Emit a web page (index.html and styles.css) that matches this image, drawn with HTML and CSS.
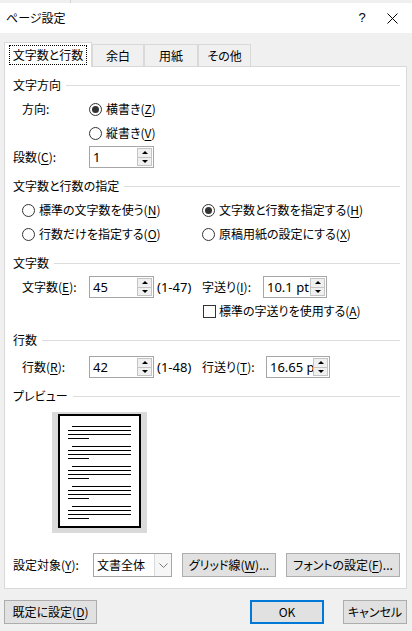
FILE: index.html
```html
<!DOCTYPE html>
<html lang="ja">
<head>
    <meta charset="UTF-8">
    <meta name="viewport" content="width=device-width, initial-scale=1">
    <title>ページ設定</title>
    <link rel="stylesheet" href="styles.css">
</head>
<body>
    <div class="dialog">
        <div class="top-strip"><span class="top-tick"></span></div>

        <!-- Title bar -->
        <div class="titlebar">
            <span class="title">ページ設定</span>
            <span class="title-btn">?</span>
            <span class="title-btn">
                <svg width="11" height="11" viewBox="0 0 11 11"><path d="M0.5 0.5L10.5 10.5M10.5 0.5L0.5 10.5" stroke="#000" stroke-width="1" fill="none"/></svg>
            </span>
        </div>

        <!-- Tabs -->
        <div class="tabs">
            <div class="tab tab-active"><span class="focus">文字数と行数</span></div>
            <div class="tab tab-margin">余白</div>
            <div class="tab tab-paper">用紙</div>
            <div class="tab tab-other">その他</div>
        </div>

        <div class="panel">
            <!-- 文字方向 -->
            <div class="group-title">文字方向</div>
            <div class="row">
                <span class="label">方向:</span>
                <span class="option"><span class="radio checked"></span>横書き(<u>Z</u>)</span>
            </div>
            <div class="row">
                <span class="option option-indent"><span class="radio"></span>縦書き(<u>V</u>)</span>
            </div>
            <div class="row row-flush">
                <span class="label label-wide">段数(<u>C</u>):</span>
                <div class="spin">
                    <span class="spin-value">1</span>
                    <span class="spin-btns"><span class="spin-up"></span><span class="spin-down"></span></span>
                </div>
            </div>

            <!-- 文字数と行数の指定 -->
            <div class="group-title group-gap">文字数と行数の指定</div>
            <div class="row">
                <span class="option col"><span class="radio"></span>標準の文字数を使う(<u>N</u>)</span>
                <span class="option"><span class="radio checked"></span>文字数と行数を指定する(<u>H</u>)</span>
            </div>
            <div class="row">
                <span class="option col"><span class="radio"></span>行数だけを指定する(<u>O</u>)</span>
                <span class="option"><span class="radio"></span>原稿用紙の設定にする(<u>X</u>)</span>
            </div>

            <!-- 文字数 -->
            <div class="group-title group-gap">文字数</div>
            <div class="row">
                <span class="label">文字数(<u>E</u>):</span>
                <div class="spin">
                    <span class="spin-value">45</span>
                    <span class="spin-btns"><span class="spin-up"></span><span class="spin-down"></span></span>
                </div>
                <span class="range">(1-47)</span>
                <span class="label-pitch">字送り(<u>I</u>):</span>
                <div class="spin spin-small">
                    <span class="spin-value">10.1 pt</span>
                    <span class="spin-btns"><span class="spin-up"></span><span class="spin-down"></span></span>
                </div>
            </div>
            <div class="row">
                <span class="option check-indent"><span class="checkbox"></span>標準の字送りを使用する(<u>A</u>)</span>
            </div>

            <!-- 行数 -->
            <div class="group-title group-gap">行数</div>
            <div class="row row-lines">
                <span class="label">行数(<u>R</u>):</span>
                <div class="spin">
                    <span class="spin-value">42</span>
                    <span class="spin-btns"><span class="spin-up"></span><span class="spin-down"></span></span>
                </div>
                <span class="range">(1-48)</span>
                <span class="label-pitch label-pitch-wide">行送り(<u>T</u>):</span>
                <div class="spin spin-small">
                    <span class="spin-value">16.65 pt</span>
                    <span class="spin-btns"><span class="spin-up"></span><span class="spin-down"></span></span>
                </div>
            </div>

            <!-- プレビュー -->
            <div class="group-title group-gap">プレビュー</div>
            <div class="preview">
                <svg width="95" height="121" viewBox="0 0 95 121">
                    <rect x="0" y="0" width="95" height="121" fill="#dadada"/>
                    <rect x="7" y="3" width="81" height="112" fill="#fff" stroke="#000" stroke-width="2"/>
                    <g fill="#000">
                        <rect x="20" y="14" width="59" height="1"/>
                        <rect x="16" y="18" width="63" height="1"/>
                        <rect x="16" y="22" width="63" height="1"/>
                        <rect x="16" y="26" width="21" height="1"/>

                        <rect x="20" y="34" width="59" height="1"/>
                        <rect x="16" y="38" width="63" height="1"/>
                        <rect x="16" y="42" width="63" height="1"/>
                        <rect x="16" y="46" width="21" height="1"/>

                        <rect x="20" y="54" width="59" height="1"/>
                        <rect x="16" y="58" width="63" height="1"/>
                        <rect x="16" y="62" width="63" height="1"/>
                        <rect x="16" y="66" width="21" height="1"/>

                        <rect x="20" y="74" width="59" height="1"/>
                        <rect x="16" y="78" width="63" height="1"/>
                        <rect x="16" y="82" width="63" height="1"/>
                        <rect x="16" y="86" width="21" height="1"/>

                        <rect x="20" y="94" width="59" height="1"/>
                        <rect x="16" y="98" width="63" height="1"/>
                        <rect x="16" y="102" width="63" height="1"/>
                        <rect x="16" y="106" width="21" height="1"/>
                    </g>
                </svg>
            </div>

            <!-- 設定対象 -->
            <div class="apply-row">
                <span class="apply-label">設定対象(<u>Y</u>):</span>
                <div class="combo">
                    <span class="combo-value">文書全体</span>
                    <span class="combo-arrow">
                        <svg width="9" height="5" viewBox="0 0 9 5"><path d="M0.5 0.5L4.5 4.5L8.5 0.5" stroke="#7a7a7a" stroke-width="1" fill="none"/></svg>
                    </span>
                </div>
                <span class="btn btn-grid">グリッド線(<u>W</u>)...</span>
                <span class="btn btn-font">フォントの設定(<u>F</u>)...</span>
            </div>
        </div>

        <!-- Dialog buttons -->
        <div class="footer">
            <span class="btn btn-default">既定に設定(<u>D</u>)</span>
            <span class="btn btn-ok">OK</span>
            <span class="btn btn-cancel">キャンセル</span>
        </div>
    </div>
</body>
</html>
```

FILE: styles.css
```css
body {
    margin: 0;
    background-color: #f0f0f0;
    font-family: "Noto Sans CJK JP", "Noto Sans", sans-serif;
    font-size: 12px;
    line-height: 16px;
    color: #000;
    font-feature-settings: "palt";
}

u {
    text-decoration-thickness: 1px;
    text-underline-offset: 2px;
}

.dialog {
    width: 412px;
    height: 631px;
    overflow: hidden;
}

.top-strip {
    height: 3px;
    background-color: #f0f0f0;
}

.top-tick {
    display: block;
    margin-left: 70px;
    width: 1px;
    height: 3px;
    background-color: #d4d4d4;
}

/* Title bar */
.titlebar {
    height: 30px;
    background-color: #ffffff;
    display: flex;
    align-items: center;
    padding: 0 5px 0 6px;
}

.title {
    flex: 1;
}

.title-btn {
    width: 30px;
    height: 30px;
    display: flex;
    justify-content: center;
    align-items: center;
    font-family: "Liberation Sans", sans-serif;
    font-size: 13px;
}

/* Tabs */
.tabs {
    margin-top: 9px;
    padding-left: 4px;
    height: 25px;
    display: flex;
    align-items: flex-end;
}

.tab {
    box-sizing: border-box;
    height: 22px;
    margin-bottom: 1px;
    border: 1px solid #d9d9d9;
    border-bottom: none;
    display: flex;
    justify-content: center;
    align-items: center;
}

.tab-active {
    width: 88px;
    height: 25px;
    margin-bottom: 0;
    background-color: #ffffff;
    position: relative;
    z-index: 1;
}

.tab-active .focus {
    outline: 1px dotted #000;
    padding: 1px 3px;
}

.tab-margin { width: 52px; }
.tab-paper { width: 54px; }
.tab-other { width: 53px; }

/* Panel */
.panel {
    box-sizing: border-box;
    width: 403px;
    margin: -1px 0 0 4px;
    padding: 7px 6px 11px 8px;
    background-color: #ffffff;
    border: 1px solid #d9d9d9;
}

.group-title {
    height: 22px;
    display: flex;
    align-items: center;
}

.group-title::after {
    content: "";
    flex: 1;
    height: 1px;
    margin-left: 5px;
    background-color: #dcdcdc;
}

.group-gap {
    margin-top: 7px;
}

.row {
    height: 22px;
    margin-top: 2px;
    padding-left: 9px;
    display: flex;
    align-items: center;
    white-space: nowrap;
}

.row-flush {
    padding-left: 0;
}

.row-lines {
    margin-top: 5px;
}

.label {
    width: 67px;
}

.label-wide {
    width: 76px;
}

.label-pitch {
    width: 61px;
}

.label-pitch-wide {
    width: 64px;
}

.option {
    display: flex;
    align-items: center;
}

.option-indent {
    margin-left: 67px;
}

.check-indent {
    margin-left: 181px;
}

.col {
    width: 180px;
}

.radio {
    box-sizing: border-box;
    width: 13px;
    height: 13px;
    margin-right: 4px;
    border: 1px solid #333333;
    border-radius: 50%;
    background-color: #ffffff;
    display: flex;
    justify-content: center;
    align-items: center;
}

.radio.checked::after {
    content: "";
    width: 7px;
    height: 7px;
    border-radius: 50%;
    background-color: #333333;
}

.checkbox {
    box-sizing: border-box;
    width: 13px;
    height: 13px;
    margin-right: 3px;
    border: 1px solid #333333;
    background-color: #ffffff;
}

/* Spin boxes */
.spin {
    box-sizing: border-box;
    width: 65px;
    height: 22px;
    padding: 1px;
    border: 1px solid #a6a6a6;
    background-color: #ffffff;
    display: flex;
}

.spin-small {
    width: 64px;
}

.spin-value {
    flex: 1;
    overflow: hidden;
    padding-left: 2px;
    line-height: 18px;
    font-family: "Noto Sans", sans-serif;
    font-size: 13px;
}

.spin-btns {
    width: 15px;
    display: flex;
    flex-direction: column;
}

.spin-up,
.spin-down {
    box-sizing: border-box;
    flex: 1;
    border: 1px solid #c4c4c4;
    background-color: #f0f0f0;
    display: flex;
    justify-content: center;
    align-items: center;
}

.spin-down {
    border-top: none;
}

.spin-up::after {
    content: "";
    border-left: 3px solid transparent;
    border-right: 3px solid transparent;
    border-bottom: 3px solid #000;
}

.spin-down::after {
    content: "";
    border-left: 3px solid transparent;
    border-right: 3px solid transparent;
    border-top: 3px solid #000;
}

.range {
    box-sizing: border-box;
    width: 48px;
    padding-left: 3px;
    font-family: "Noto Sans", sans-serif;
    font-size: 13px;
}

/* Preview */
.preview {
    margin: 5px 0 0 39px;
    height: 121px;
}

.preview svg {
    display: block;
}

/* Apply to */
.apply-row {
    margin-top: 20px;
    height: 24px;
    display: flex;
    align-items: center;
    white-space: nowrap;
}

.apply-label {
    width: 80px;
}

.combo {
    box-sizing: border-box;
    width: 79px;
    height: 24px;
    border: 1px solid #a6a6a6;
    background-color: #ffffff;
    display: flex;
}

.combo-value {
    flex: 1;
    padding-left: 3px;
    line-height: 22px;
}

.combo-arrow {
    width: 16px;
    border-left: 1px solid #d9d9d9;
    background-color: #f6f6f6;
    display: flex;
    justify-content: center;
    align-items: center;
}

.btn {
    box-sizing: border-box;
    height: 24px;
    border: 1px solid #adadad;
    background-color: #e1e1e1;
    display: flex;
    justify-content: center;
    align-items: center;
    white-space: nowrap;
}

.btn-grid {
    width: 94px;
    margin-left: 10px;
}

.btn-font {
    width: 114px;
    margin-left: 10px;
}

/* Footer */
.footer {
    margin-top: 11px;
    padding: 0 5px 0 4px;
    display: flex;
}

.btn-default {
    width: 93px;
}

.btn-ok {
    width: 74px;
    margin-left: auto;
    border: 2px solid #0078d7;
}

.btn-cancel {
    width: 64px;
    margin-left: 19px;
}
```
